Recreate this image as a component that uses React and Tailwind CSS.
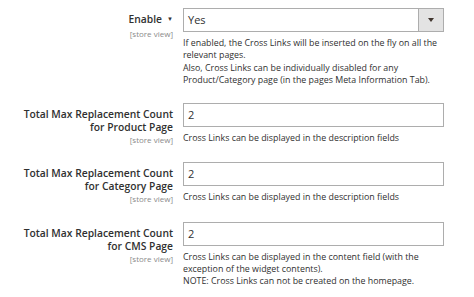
const rows = [
  {
    label: ["Enable"],
    dropdownLabel: true,
    control: "select",
    value: "Yes",
    gap: "",
    note: [
      "If enabled, the Cross Links will be inserted on the fly on all the",
      "relevant pages.",
      "Also, Cross Links can be individually disabled for any",
      "Product/Category page (in the pages Meta Information Tab).",
    ],
  },
  {
    label: ["Total Max Replacement Count", "for Product Page"],
    control: "input",
    value: "2",
    gap: "mt-[16px]",
    note: ["Cross Links can be displayed in the description fields"],
  },
  {
    label: ["Total Max Replacement Count", "for Category Page"],
    control: "input",
    value: "2",
    gap: "mt-[17px]",
    note: ["Cross Links can be displayed in the description fields"],
  },
  {
    label: ["Total Max Replacement Count", "for CMS Page"],
    control: "input",
    value: "2",
    gap: "mt-[18px]",
    note: [
      "Cross Links can be displayed in the content field (with the",
      "exception of the widget contents).",
      "NOTE: Cross Links can not be created on the homepage.",
    ],
  },
]

function Row({ row }) {
  return (
    <div className={`flex ${row.gap}`}>
      <div className="w-[173px] shrink-0 pt-[5px] text-right">
        {row.label.map((l, i) => (
          <div key={i} className="text-[10.3px] font-semibold leading-[13px] text-[#303030]">
            {l}
            {row.dropdownLabel && <span className="ml-[5px] inline-block translate-y-[-2px] text-[6px]">▼</span>}
          </div>
        ))}
        <div className="text-[8px] leading-[11px] text-[#8a8a8a]">[store view]</div>
      </div>
      <div className="ml-[10px] w-[261px]">
        {row.control === "select" ? (
          <div className="flex h-[24px] border border-[#adadad] bg-white">
            <div className="flex-1 pl-[4px] text-[11px] leading-[22px] text-[#303030]">{row.value}</div>
            <div className="flex w-[25px] items-center justify-center border-l border-[#adadad] bg-[#e3e3e3]">
              <svg width="6" height="4" viewBox="0 0 6 4">
                <path d="M0 0h6L3 4z" fill="#41362f" />
              </svg>
            </div>
          </div>
        ) : (
          <div className="h-[24px] border border-[#adadad] bg-white pl-[4px] text-[11px] leading-[22px] text-[#303030]">
            {row.value}
          </div>
        )}
        <div className="mt-[5px] text-[8.85px] leading-[12.4px] text-[#303030]">
          {row.note.map((n, i) => (
            <div key={i} className="whitespace-nowrap">{n}</div>
          ))}
        </div>
      </div>
    </div>
  )
}

export default function App() {
  return (
    <div className="h-[297px] w-[474px] overflow-hidden bg-white pt-[8px]" style={{ fontFamily: "'Open Sans', sans-serif" }}>
      <div className="flex flex-col">
        {rows.map((row, i) => (
          <Row key={i} row={row} />
        ))}
      </div>
    </div>
  )
}
